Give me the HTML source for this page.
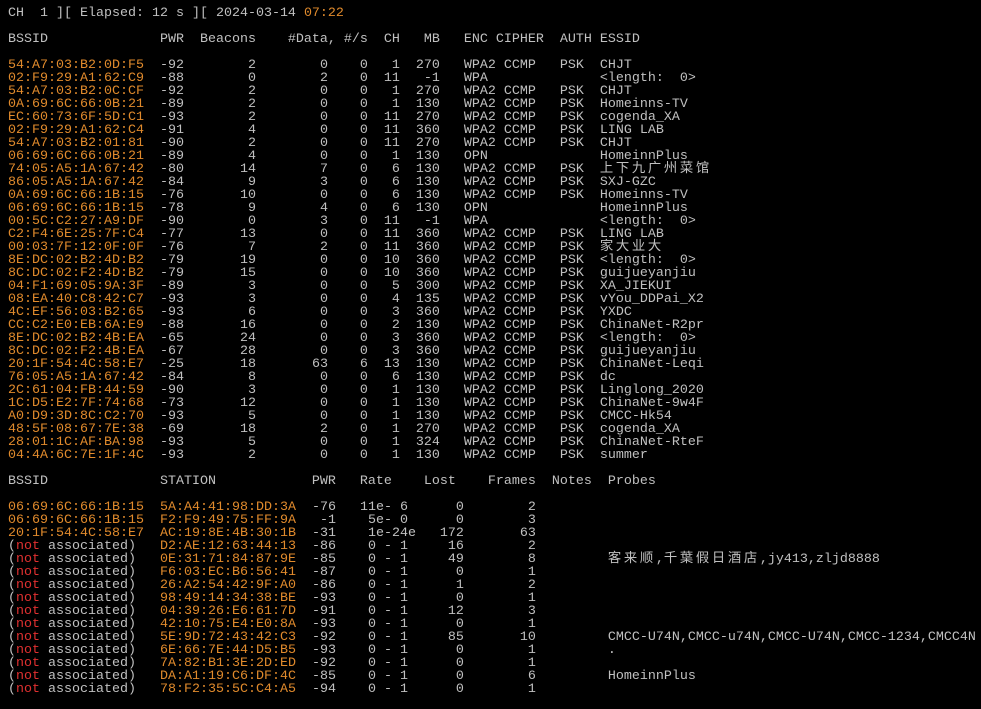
<!DOCTYPE html>
<html><head><meta charset="utf-8"><style>
html,body{margin:0;padding:0;background:#000;width:981px;height:709px;overflow:hidden}
pre{margin:0;padding:7px 0 0 8px;font-family:"Liberation Mono","Noto Sans CJK SC",monospace;font-size:13.333px;line-height:13px;color:#c0c0c0;white-space:pre}
.o{color:#e08a2c}.r{color:#e03030}.c{letter-spacing:2.67px}
</style></head><body><pre>CH  1 ][ Elapsed: 12 s ][ 2024-03-14 <span class="o">07:22</span>

BSSID              PWR  Beacons    #Data, #/s  CH   MB   ENC CIPHER  AUTH ESSID

<span class="o">54:A7:03:B2:0D:F5</span>  -92        2        0    0   1  270   WPA2 CCMP   PSK  CHJT
<span class="o">02:F9:29:A1:62:C9</span>  -88        0        2    0  11   -1   WPA              &lt;length:  0&gt;
<span class="o">54:A7:03:B2:0C:CF</span>  -92        2        0    0   1  270   WPA2 CCMP   PSK  CHJT
<span class="o">0A:69:6C:66:0B:21</span>  -89        2        0    0   1  130   WPA2 CCMP   PSK  Homeinns-TV
<span class="o">EC:60:73:6F:5D:C1</span>  -93        2        0    0  11  270   WPA2 CCMP   PSK  cogenda_XA
<span class="o">02:F9:29:A1:62:C4</span>  -91        4        0    0  11  360   WPA2 CCMP   PSK  LING LAB
<span class="o">54:A7:03:B2:01:81</span>  -90        2        0    0  11  270   WPA2 CCMP   PSK  CHJT
<span class="o">06:69:6C:66:0B:21</span>  -89        4        0    0   1  130   OPN              HomeinnPlus
<span class="o">74:05:A5:1A:67:42</span>  -80       14        7    0   6  130   WPA2 CCMP   PSK  <span class="c">上下九广州菜馆</span>
<span class="o">86:05:A5:1A:67:42</span>  -84        9        3    0   6  130   WPA2 CCMP   PSK  SXJ-GZC
<span class="o">0A:69:6C:66:1B:15</span>  -76       10        0    0   6  130   WPA2 CCMP   PSK  Homeinns-TV
<span class="o">06:69:6C:66:1B:15</span>  -78        9        4    0   6  130   OPN              HomeinnPlus
<span class="o">00:5C:C2:27:A9:DF</span>  -90        0        3    0  11   -1   WPA              &lt;length:  0&gt;
<span class="o">C2:F4:6E:25:7F:C4</span>  -77       13        0    0  11  360   WPA2 CCMP   PSK  LING LAB
<span class="o">00:03:7F:12:0F:0F</span>  -76        7        2    0  11  360   WPA2 CCMP   PSK  <span class="c">家大业大</span>
<span class="o">8E:DC:02:B2:4D:B2</span>  -79       19        0    0  10  360   WPA2 CCMP   PSK  &lt;length:  0&gt;
<span class="o">8C:DC:02:F2:4D:B2</span>  -79       15        0    0  10  360   WPA2 CCMP   PSK  guijueyanjiu
<span class="o">04:F1:69:05:9A:3F</span>  -89        3        0    0   5  300   WPA2 CCMP   PSK  XA_JIEKUI
<span class="o">08:EA:40:C8:42:C7</span>  -93        3        0    0   4  135   WPA2 CCMP   PSK  vYou_DDPai_X2
<span class="o">4C:EF:56:03:B2:65</span>  -93        6        0    0   3  360   WPA2 CCMP   PSK  YXDC
<span class="o">CC:C2:E0:EB:6A:E9</span>  -88       16        0    0   2  130   WPA2 CCMP   PSK  ChinaNet-R2pr
<span class="o">8E:DC:02:B2:4B:EA</span>  -65       24        0    0   3  360   WPA2 CCMP   PSK  &lt;length:  0&gt;
<span class="o">8C:DC:02:F2:4B:EA</span>  -67       28        0    0   3  360   WPA2 CCMP   PSK  guijueyanjiu
<span class="o">20:1F:54:4C:58:E7</span>  -25       18       63    6  13  130   WPA2 CCMP   PSK  ChinaNet-Leqi
<span class="o">76:05:A5:1A:67:42</span>  -84        8        0    0   6  130   WPA2 CCMP   PSK  dc
<span class="o">2C:61:04:FB:44:59</span>  -90        3        0    0   1  130   WPA2 CCMP   PSK  Linglong_2020
<span class="o">1C:D5:E2:7F:74:68</span>  -73       12        0    0   1  130   WPA2 CCMP   PSK  ChinaNet-9w4F
<span class="o">A0:D9:3D:8C:C2:70</span>  -93        5        0    0   1  130   WPA2 CCMP   PSK  CMCC-Hk54
<span class="o">48:5F:08:67:7E:38</span>  -69       18        2    0   1  270   WPA2 CCMP   PSK  cogenda_XA
<span class="o">28:01:1C:AF:BA:98</span>  -93        5        0    0   1  324   WPA2 CCMP   PSK  ChinaNet-RteF
<span class="o">04:4A:6C:7E:1F:4C</span>  -93        2        0    0   1  130   WPA2 CCMP   PSK  summer

BSSID              STATION            PWR   Rate    Lost    Frames  Notes  Probes

<span class="o">06:69:6C:66:1B:15</span>  <span class="o">5A:A4:41:98:DD:3A</span>  -76   11e- 6      0        2
<span class="o">06:69:6C:66:1B:15</span>  <span class="o">F2:F9:49:75:FF:9A</span>   -1    5e- 0      0        3
<span class="o">20:1F:54:4C:58:E7</span>  <span class="o">AC:19:8E:4B:30:1B</span>  -31    1e-24e   172       63
(<span class="r">not</span> associated)   <span class="o">D2:AE:12:63:44:13</span>  -86    0 - 1     16        2
(<span class="r">not</span> associated)   <span class="o">0E:31:71:84:87:9E</span>  -85    0 - 1     49        8         <span class="c">客来顺</span>,<span class="c">千葉假日酒店</span>,jy413,zljd8888
(<span class="r">not</span> associated)   <span class="o">F6:03:EC:B6:56:41</span>  -87    0 - 1      0        1
(<span class="r">not</span> associated)   <span class="o">26:A2:54:42:9F:A0</span>  -86    0 - 1      1        2
(<span class="r">not</span> associated)   <span class="o">98:49:14:34:38:BE</span>  -93    0 - 1      0        1
(<span class="r">not</span> associated)   <span class="o">04:39:26:E6:61:7D</span>  -91    0 - 1     12        3
(<span class="r">not</span> associated)   <span class="o">42:10:75:E4:E0:8A</span>  -93    0 - 1      0        1
(<span class="r">not</span> associated)   <span class="o">5E:9D:72:43:42:C3</span>  -92    0 - 1     85       10         CMCC-U74N,CMCC-u74N,CMCC-U74N,CMCC-1234,CMCC4N
(<span class="r">not</span> associated)   <span class="o">6E:66:7E:44:D5:B5</span>  -93    0 - 1      0        1         .
(<span class="r">not</span> associated)   <span class="o">7A:82:B1:3E:2D:ED</span>  -92    0 - 1      0        1
(<span class="r">not</span> associated)   <span class="o">DA:A1:19:C6:DF:4C</span>  -85    0 - 1      0        6         HomeinnPlus
(<span class="r">not</span> associated)   <span class="o">78:F2:35:5C:C4:A5</span>  -94    0 - 1      0        1
</pre></body></html>
